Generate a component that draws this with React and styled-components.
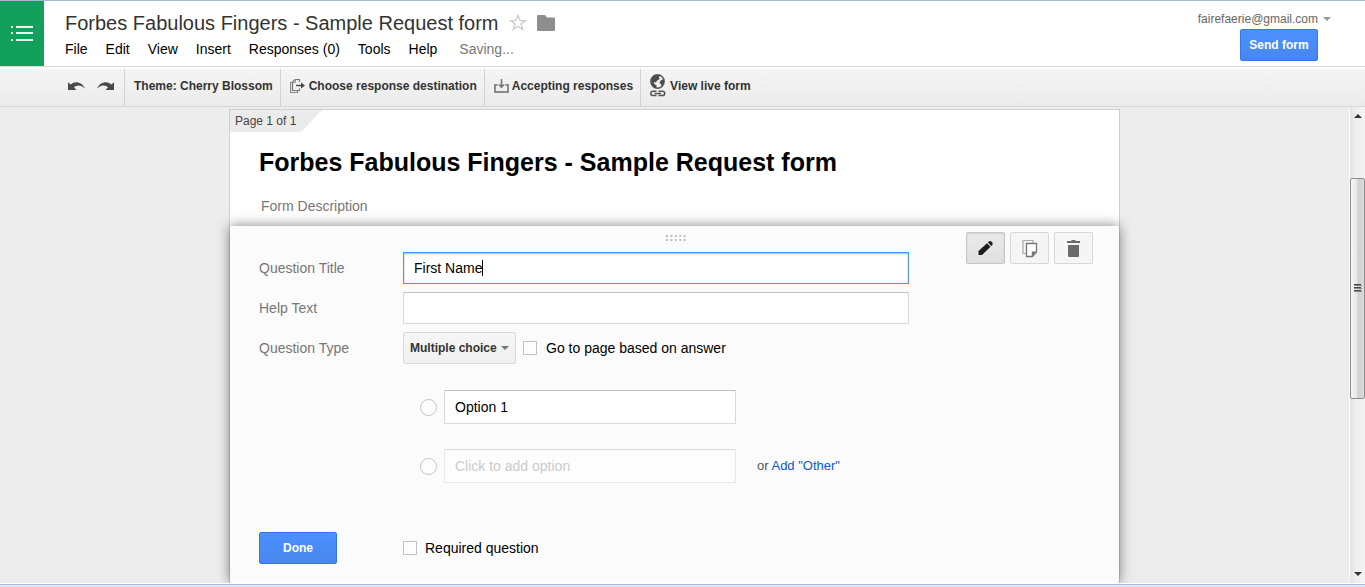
import React, { useState } from "react";
import styled, { createGlobalStyle, css } from "styled-components";

const GlobalStyle = createGlobalStyle`
  * {
    box-sizing: border-box;
  }

  body {
    margin: 0;
    background: #ededed;
  }

  body, button, input, select {
    font-family: "Liberation Sans", Arial, sans-serif;
  }
`;

const Page = styled.div`
  display: flex;
  flex-direction: column;
  height: 100vh;
  overflow: hidden;
  border-top: 1px solid #a5b7d1;
  font-size: 14px;
`;

const Header = styled.header`
  display: flex;
  background: #fff;
  border-bottom: 1px solid #d9d9d9;
`;

const Logo = styled.a`
  display: flex;
  align-items: center;
  justify-content: center;
  width: 44px;
  height: 65px;
  background: #12a05c;
`;

const HeaderMain = styled.div`
  flex: 1;
  padding: 10px 0 0 21px;
`;

const TitleRow = styled.div`
  display: flex;
  align-items: center;
  height: 24px;
  gap: 10px;
`;

const DocTitle = styled.h1`
  margin: 0;
  font-size: 20px;
  font-weight: 400;
  line-height: 24px;
  color: #333;
`;

const IconButton = styled.button`
  display: flex;
  padding: 0;
  border: 0;
  background: none;
  cursor: pointer;
`;

const Menu = styled.nav`
  display: flex;
  gap: 18px;
  margin-top: 4px;
`;

const MenuItem = styled.button`
  padding: 0;
  border: 0;
  background: none;
  color: #000;
  font-size: 14px;
  line-height: 20px;
  cursor: pointer;
`;

const Saving = styled.span`
  margin-left: 4px;
  color: #777;
  line-height: 20px;
`;

const Account = styled.div`
  display: flex;
  flex-direction: column;
  align-items: flex-end;
  padding: 8px 34px 0 0;
`;

const Email = styled.button`
  display: flex;
  align-items: center;
  gap: 5px;
  padding: 0;
  border: 0;
  background: none;
  color: #666;
  font-size: 12px;
  line-height: 20px;
  cursor: pointer;
`;

const BlueButton = styled.button`
  width: 78px;
  height: 32px;
  padding: 0;
  border: 1px solid #3079ed;
  border-radius: 2px;
  background: linear-gradient(#4d90fe, #4787ed);
  color: #fff;
  font-size: 12px;
  font-weight: 700;
  cursor: pointer;
`;

const SendButton = styled(BlueButton)`
  margin-right: 13px;
`;

const Toolbar = styled.div`
  display: flex;
  height: 40px;
  border-top: 2px solid #fcfcfc;
  border-bottom: 1px solid #d6d6d6;
  background: linear-gradient(#f5f5f5, #ebebeb);
`;

const History = styled.div`
  display: flex;
  align-items: center;
  gap: 12px;
  padding: 0 10px 4px 68px;
`;

const ToolButton = styled.button`
  display: flex;
  align-items: center;
  gap: ${(props) => props.$gap || 0}px;
  padding: 0 7px 4px 9px;
  border: 0;
  border-left: 1px solid #d3d3d3;
  background: none;
  color: #333;
  font-size: 12px;
  font-weight: 700;
  white-space: nowrap;
  cursor: pointer;
`;

const Workspace = styled.div`
  display: flex;
  flex: 1;
  min-height: 0;
  background: #ededed;
`;

const Canvas = styled.main`
  display: flex;
  flex: 1;
  justify-content: center;
  padding-top: 2px;
  overflow: hidden;
`;

const Paper = styled.section`
  display: flex;
  flex-direction: column;
  width: 100%;
  max-width: 891px;
  border: 1px solid #d0d0d0;
  border-bottom: 0;
  background: #fff;
`;

const PageTag = styled.div`
  width: 92px;
  height: 22px;
  padding-left: 5px;
  background: #ebebeb;
  clip-path: polygon(0 0, 100% 0, 71px 100%, 0 100%);
  color: #444;
  font-size: 12px;
  line-height: 22px;
`;

const FormHead = styled.div`
  height: 94px;
  padding: 14px 29px 0;
`;

const FormTitle = styled.h2`
  margin: 0;
  font-size: 25px;
  line-height: 32px;
  color: #000;
`;

const FormDescription = styled.p`
  margin: 18px 0 0;
  padding-left: 2px;
  color: #777;
  line-height: 20px;
`;

const Question = styled.form`
  flex: 1;
  padding: 0 26px 0 29px;
  background: #fbfbfb;
  box-shadow: 0 0 12px rgba(0, 0, 0, 0.5);
`;

const QuestionBar = styled.div`
  display: grid;
  grid-template-columns: 1fr auto 1fr;
  height: 26px;
`;

const Grip = styled.div`
  grid-column: 2;
  display: flex;
  padding-top: 9px;
`;

const Actions = styled.div`
  display: flex;
  justify-content: flex-end;
  gap: 5px;
  padding-top: 6px;
`;

const ActionButton = styled.button`
  display: flex;
  flex: none;
  align-items: center;
  justify-content: center;
  width: 39px;
  height: 32px;
  padding: 0;
  border: 1px solid #d8d8d8;
  border-radius: 2px;
  background: #f5f5f5;
  cursor: pointer;

  ${(props) =>
    props.$active &&
    css`
      border-color: #c6c6c6;
      background: linear-gradient(#eaeaea, #e0e0e0);
      box-shadow: inset 0 1px 2px rgba(0, 0, 0, 0.1);
    `}
`;

const Fields = styled.div`
  display: grid;
  grid-template-columns: 144px minmax(0, 506px);
  row-gap: 8px;
  align-items: center;
`;

const Label = styled.label`
  color: #777;
  line-height: 20px;
`;

const TextInput = styled.input`
  width: 100%;
  height: ${(props) => props.$height || 32}px;
  padding: 0 10px;
  border: 1px solid #d9d9d9;
  border-top-color: #c0c0c0;
  background: #fff;
  color: #000;
  font-size: 14px;
  outline: none;

  &::placeholder {
    color: #ccc;
    opacity: 1;
  }

  ${(props) =>
    props.$active &&
    css`
      border-color: #4d90fe;
      box-shadow: inset 0 1px 2px rgba(0, 0, 0, 0.3);
    `}

  ${(props) =>
    props.$faded &&
    css`
      border-color: #e8e8e8;
      border-top-color: #dcdcdc;
      background: #fdfdfd;
    `}
`;

const Editing = styled.div`
  position: relative;
`;

const Caret = styled.span`
  position: absolute;
  top: 8px;
  left: 79px;
  width: 1px;
  height: 16px;
  background: #000;
`;

const TypeRow = styled.div`
  display: flex;
  align-items: center;
  gap: 7px;
`;

const SelectBox = styled.div`
  display: grid;
  align-items: center;
  width: 113px;

  > * {
    grid-area: 1 / 1;
  }

  > svg {
    justify-self: end;
    margin-right: 7px;
    pointer-events: none;
  }
`;

const Select = styled.select`
  width: 100%;
  height: 32px;
  padding: 0 0 0 6px;
  border: 1px solid #d9d9d9;
  border-radius: 2px;
  background: linear-gradient(#f6f6f6, #f0f0f0);
  color: #333;
  font-size: 12px;
  font-weight: 700;
  appearance: none;
`;

const CheckLabel = styled.label`
  display: flex;
  align-items: center;
  gap: ${(props) => props.$gap}px;
  color: #000;
  line-height: 20px;
`;

const Checkbox = styled.input.attrs({ type: "checkbox" })`
  width: 14px;
  height: 14px;
  margin: 0;
  border: 1px solid #c1c1c1;
  background: #fdfdfd;
  appearance: none;
`;

const Options = styled.div`
  display: flex;
  flex-direction: column;
  gap: 25px;
  padding: 26px 0 49px 161px;
`;

const OptionRow = styled.div`
  display: flex;
  align-items: center;
  gap: 7px;
`;

const Radio = styled.input.attrs({ type: "radio" })`
  width: 17px;
  height: 17px;
  margin: 0;
  border: 1px solid #c3c3c3;
  border-radius: 50%;
  background: #fdfdfd;
  appearance: none;
`;

const OptionField = styled.div`
  width: 292px;
`;

const AddOther = styled.span`
  margin-left: 14px;
  color: #555;
  font-size: 13px;
  line-height: 20px;

  a {
    color: #15c;
    text-decoration: none;
  }
`;

const Footer = styled.div`
  display: grid;
  grid-template-columns: 144px 1fr;
  align-items: center;
`;

const Scrollbar = styled.div`
  display: flex;
  flex-direction: column;
  align-items: center;
  width: 16px;
  padding: 7px 0 7px;
  border-left: 1px solid #fafafa;
  background: linear-gradient(to right, #e3e3e3, #eeeeee 35%, #f3f3f3);
`;

const Track = styled.div`
  display: flex;
  flex: 1;
  flex-direction: column;
  width: 100%;
  padding: 60px 0 0;
`;

const Thumb = styled.div`
  display: flex;
  align-items: center;
  justify-content: center;
  height: 56%;
  border: 1px solid #8e8e8e;
  border-radius: 2px;
  background: linear-gradient(to right, #f6f6f6, #e6e6e7 48%, #cfcfd1 52%, #dcdcde);
`;

const StatusStrip = styled.div`
  height: 4px;
  border-top: 1px solid #fff;
  background: linear-gradient(#a9bed6 1px, #dce7f4 1px);
`;

const DownArrow = ({ color = "#777" }) => (
  <svg width="8" height="4" viewBox="0 0 8 4" fill={color}>
    <path d="M0 0h8L4 4z" />
  </svg>
);

const FormsLogo = () => (
  <svg width="24" height="18" viewBox="0 0 24 18" fill="#e4f5ec">
    <path d="M1 1h2v2H1zM6 1h17v2H6zM1 7h2v2H1zM6 7h17v2H6zM1 14h2v2H1zM6 14h17v2H6z" />
  </svg>
);

const StarIcon = () => (
  <svg width="18" height="18" viewBox="0 0 18 18" fill="#fff" stroke="#ccc" strokeWidth="1.3">
    <path d="M9 1.5l2 5.100h5.400l-4.400 3.400 1.700 5.500L9 12.300l-4.700 3.200L6 10 1.600 6.600H7z" />
  </svg>
);

const FolderIcon = () => (
  <svg width="18" height="16" viewBox="0 0 18 16" fill="#8e8e8e">
    <path d="M1 0h7l2 2.500h7q1 0 1 1V15q0 1-1 1H1q-1 0-1-1V1q0-1 1-1z" />
  </svg>
);

const UndoIcon = ({ flip }) => (
  <svg width="17" height="10" viewBox="0 0 17 10" fill="#4a4a4a">
    <path
      transform={flip ? "translate(17 0) scale(-1 1)" : undefined}
      d="M0 1.200V9h8.600L6 6.400C9 3.700 13 3.600 16.800 7.600 14.300 1 7-.6 2.700 3.600z"
    />
  </svg>
);

const DestinationIcon = () => (
  <svg width="15" height="16" viewBox="0 0 15 16" fill="none">
    <path d="M2.500 4.500h-2v10h7v-2" stroke="#8a8a8a" strokeWidth="1.200" />
    <path d="M9.500 4V1.500H5L2.500 4v8.500h7V10.500" stroke="#777" strokeWidth="1.200" />
    <path d="M2.500 4.500h3v-3" stroke="#999" />
    <path d="M6 7.500h6" stroke="#444" strokeWidth="1.4" />
    <path d="M11 4.500l4 3-4 3z" fill="#444" />
  </svg>
);

const TrayIcon = () => (
  <svg width="15" height="16" viewBox="0 0 15 16" fill="none">
    <path d="M3.500 7H1v7h13V7h-2.500" stroke="#8a8a8a" strokeWidth="2" />
    <path d="M7.500 1v6" stroke="#777" strokeWidth="1.600" />
    <path d="M4 6.500h7l-3.500 4z" fill="#777" />
  </svg>
);

const GlobeIcon = () => (
  <svg width="16" height="23" viewBox="0 0 16 23" fill="none">
    <circle cx="7.500" cy="7.500" r="6.700" fill="#eee" stroke="#555" strokeWidth="1.400" />
    <path
      d="M1.700 4.500C4 1 7.500.5 10.200 1.500L8.700 3.500l1 1.500-2.500 1.500-1.500 2-2.200-.7 1.200 2.700 2 1-.5 2.500C2.200 13 .2 9 1.700 4.500z"
      fill="#4a4a4a"
    />
    <path d="M10.700 6.500l3-1.500c1 3 0 6-2 7.500l-.8-2.500-1.500-1.300z" fill="#4a4a4a" />
    <path
      d="M6.500 17.200H3a2.200 2.200 0 0 0 0 4.400h3.500M8.500 17.200H12.500a2.200 2.200 0 0 1 0 4.400H8.500M4.500 19.400h6.500"
      stroke="#555"
      strokeWidth="1.500"
    />
  </svg>
);

const GripIcon = () => (
  <svg width="20" height="7" viewBox="0 0 20 7">
    <path d="M0 1h20M0 5h20" stroke="#bdbdbd" strokeWidth="2" strokeDasharray="2 2.400" />
  </svg>
);

const PencilIcon = () => (
  <svg width="16" height="16" viewBox="0 0 16 16" fill="#1c1c1c">
    <path d="M.5 11L9 3.200l3.500 3.500L4 15H1q-.5 0-.5-.5zM9.800 2.500l1.100-1q1.200-.9 2.400.1l1 1q.9 1.200 0 2.300l-1.100 1.100z" />
  </svg>
);

const CopyIcon = () => (
  <svg width="16" height="19" viewBox="0 0 16 19" fill="none">
    <path d="M4 14.500H1v-13h10V4" stroke="#aaa" strokeWidth="1.200" />
    <path d="M4.500 4.500h10v8.500l-4 4.500h-6z" fill="#fff" stroke="#777" strokeWidth="1.300" />
    <path d="M14.600 12.500h-4.800v5.200z" fill="#777" />
  </svg>
);

const TrashIcon = () => (
  <svg width="14" height="17" viewBox="0 0 14 17" fill="#6b6b6b">
    <path d="M0 1h4.500V0h4v1H13v2H0zM1 5h11v11q0 1-1 1H2q-1 0-1-1z" />
  </svg>
);

const menuItems = ["File", "Edit", "View", "Insert", "Responses (0)", "Tools", "Help"];

const tools = [
  { name: "Theme: Cherry Blossom" },
  { name: "Choose response destination", icon: <DestinationIcon />, gap: 4 },
  { name: "Accepting responses", icon: <TrayIcon />, gap: 3 },
  { name: "View live form", icon: <GlobeIcon />, gap: 4 },
];

export default function App() {
  const [title, setTitle] = useState("First Name");
  const [option, setOption] = useState("Option 1");

  return (
    <>
      <GlobalStyle />
      <Page>
        <Header>
          <Logo href="#" aria-label="Forms home">
            <FormsLogo />
          </Logo>
          <HeaderMain>
            <TitleRow>
              <DocTitle>Forbes Fabulous Fingers - Sample Request form</DocTitle>
              <IconButton aria-label="Star">
                <StarIcon />
              </IconButton>
              <IconButton aria-label="Move to folder">
                <FolderIcon />
              </IconButton>
            </TitleRow>
            <Menu>
              {menuItems.map((item) => (
                <MenuItem key={item}>{item}</MenuItem>
              ))}
              <Saving>Saving...</Saving>
            </Menu>
          </HeaderMain>
          <Account>
            <Email>
              fairefaerie@gmail.com
              <DownArrow color="#999" />
            </Email>
            <SendButton>Send form</SendButton>
          </Account>
        </Header>

        <Toolbar>
          <History>
            <IconButton aria-label="Undo">
              <UndoIcon />
            </IconButton>
            <IconButton aria-label="Redo">
              <UndoIcon flip />
            </IconButton>
          </History>
          {tools.map((tool) => (
            <ToolButton key={tool.name} $gap={tool.gap}>
              {tool.icon}
              {tool.name}
            </ToolButton>
          ))}
        </Toolbar>

        <Workspace>
          <Canvas>
            <Paper>
              <PageTag>Page 1 of 1</PageTag>
              <FormHead>
                <FormTitle>Forbes Fabulous Fingers - Sample Request form</FormTitle>
                <FormDescription>Form Description</FormDescription>
              </FormHead>

              <Question onSubmit={(e) => e.preventDefault()}>
                <QuestionBar>
                  <Grip>
                    <GripIcon />
                  </Grip>
                  <Actions>
                    <ActionButton type="button" $active aria-label="Edit">
                      <PencilIcon />
                    </ActionButton>
                    <ActionButton type="button" aria-label="Duplicate">
                      <CopyIcon />
                    </ActionButton>
                    <ActionButton type="button" aria-label="Delete">
                      <TrashIcon />
                    </ActionButton>
                  </Actions>
                </QuestionBar>

                <Fields>
                  <Label htmlFor="title">Question Title</Label>
                  <Editing>
                    <TextInput
                      id="title"
                      $active
                      value={title}
                      onChange={(e) => setTitle(e.target.value)}
                    />
                    {title === "First Name" && <Caret />}
                  </Editing>
                  <Label htmlFor="help">Help Text</Label>
                  <TextInput id="help" />
                  <Label htmlFor="type">Question Type</Label>
                  <TypeRow>
                    <SelectBox>
                      <Select id="type">
                        <option>Multiple choice</option>
                      </Select>
                      <DownArrow />
                    </SelectBox>
                    <CheckLabel $gap={9}>
                      <Checkbox />
                      Go to page based on answer
                    </CheckLabel>
                  </TypeRow>
                </Fields>

                <Options>
                  <OptionRow>
                    <Radio name="option" aria-label="Option 1" />
                    <OptionField>
                      <TextInput
                        $height={34}
                        aria-label="Option 1 text"
                        value={option}
                        onChange={(e) => setOption(e.target.value)}
                      />
                    </OptionField>
                  </OptionRow>
                  <OptionRow>
                    <Radio name="option" aria-label="New option" />
                    <OptionField>
                      <TextInput
                        $height={34}
                        $faded
                        aria-label="New option text"
                        placeholder="Click to add option"
                      />
                    </OptionField>
                    <AddOther>
                      or <a href="#">Add "Other"</a>
                    </AddOther>
                  </OptionRow>
                </Options>

                <Footer>
                  <BlueButton>Done</BlueButton>
                  <CheckLabel $gap={8}>
                    <Checkbox />
                    Required question
                  </CheckLabel>
                </Footer>
              </Question>
            </Paper>
          </Canvas>

          <Scrollbar>
            <svg width="8" height="4" viewBox="0 0 8 4" fill="#333">
              <path d="M0 4h8L4 0z" />
            </svg>
            <Track>
              <Thumb>
                <svg width="8" height="9" viewBox="0 0 8 9">
                  <path d="M0 .5h7M0 3.500h7M0 6.500h7" stroke="#444" />
                  <path d="M0 1.500h8M0 4.500h8M0 7.500h8" stroke="#888" />
                </svg>
              </Thumb>
            </Track>
            <DownArrow color="#333" />
          </Scrollbar>
        </Workspace>
        <StatusStrip />
      </Page>
    </>
  );
}
